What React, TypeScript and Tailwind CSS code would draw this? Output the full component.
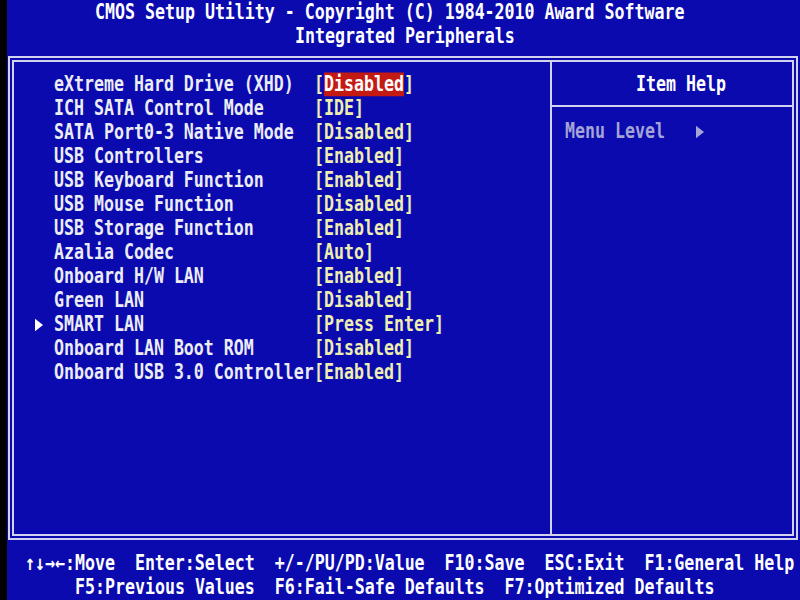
import React from 'react';

type Item = {
  label: string;
  value: string;
  selected?: boolean;
  submenu?: boolean;
};

const ITEMS: Item[] = [
  { label: 'eXtreme Hard Drive (XHD)', value: 'Disabled', selected: true },
  { label: 'ICH SATA Control Mode', value: 'IDE' },
  { label: 'SATA Port0-3 Native Mode', value: 'Disabled' },
  { label: 'USB Controllers', value: 'Enabled' },
  { label: 'USB Keyboard Function', value: 'Enabled' },
  { label: 'USB Mouse Function', value: 'Disabled' },
  { label: 'USB Storage Function', value: 'Enabled' },
  { label: 'Azalia Codec', value: 'Auto' },
  { label: 'Onboard H/W LAN', value: 'Enabled' },
  { label: 'Green LAN', value: 'Disabled' },
  { label: 'SMART LAN', value: 'Press Enter', submenu: true },
  { label: 'Onboard LAN Boot ROM', value: 'Disabled' },
  { label: 'Onboard USB 3.0 Controller', value: 'Enabled' },
];

// small solid triangle used for sub-menu markers
const Pointer: React.FC<{ className?: string }> = ({ className }) => (
  <svg width="10" height="12" viewBox="0 0 10 12" className={className}>
    <polygon points="1,1 9,6 1,11" fill="currentColor" />
  </svg>
);

const Row: React.FC<{ children: React.ReactNode; className?: string }> = ({ children, className = '' }) => (
  <div className={`flex h-[24px] items-center leading-[24px] whitespace-pre scale-y-125 ${className}`}>
    {children}
  </div>
);

const App: React.FC = () => {
  return (
    <div
      className="flex h-[600px] w-[800px] overflow-hidden bg-black font-bold text-[16.6px] text-[#ececf4]"
      style={{ fontFamily: '"DejaVu Sans Mono", "Liberation Mono", monospace' }}
    >
      <div className="w-[7px] shrink-0 bg-black" />
      <div className="flex flex-1 flex-col bg-[#0a0aae]">
        {/* Title */}
        <div className="h-[56px] pt-[1px] text-white">
          <Row className="pl-[88px]">CMOS Setup Utility - Copyright (C) 1984-2010 Award Software</Row>
          <Row className="pl-[288px]">Integrated Peripherals</Row>
        </div>

        {/* Main frame */}
        <div className="ml-[1px] flex h-[485px] w-[790px] border-[6px] border-double border-[#d2d2f0]">
          {/* Settings list */}
          <div className="w-[536px] pt-[11px] pl-[20px]">
            {ITEMS.map((item) => (
              <Row key={item.label}>
                <span className="flex w-[20px] items-center">
                  {item.submenu && <Pointer className="text-white" />}
                </span>
                <span className="w-[260px]">{item.label}</span>
                <span className="text-[#eeeeb0]">
                  [
                  {item.selected ? (
                    <span className="bg-[#c41a14] text-white">{item.value}</span>
                  ) : (
                    item.value
                  )}
                  ]
                </span>
              </Row>
            ))}
          </div>

          {/* Item help */}
          <div className="flex flex-1 flex-col border-l-2 border-[#d2d2f0]">
            <div className="h-[45px] border-b-2 border-[#d2d2f0] pt-[11px] pl-[84px] text-white">
              <Row>Item Help</Row>
            </div>
            <div className="pt-[13px] pl-[13px] text-[#a4a4d6]">
              <Row>
                <span className="w-[130px]">Menu Level</span>
                <Pointer />
              </Row>
            </div>
          </div>
        </div>

        {/* Key legend */}
        <div className="pt-[12px] text-white">
          <Row className="pl-[18px]">↑↓→←:Move  Enter:Select  +/-/PU/PD:Value  F10:Save  ESC:Exit  F1:General Help</Row>
          <Row className="pl-[68px]">F5:Previous Values  F6:Fail-Safe Defaults  F7:Optimized Defaults</Row>
        </div>
      </div>
    </div>
  );
};

export default App;
